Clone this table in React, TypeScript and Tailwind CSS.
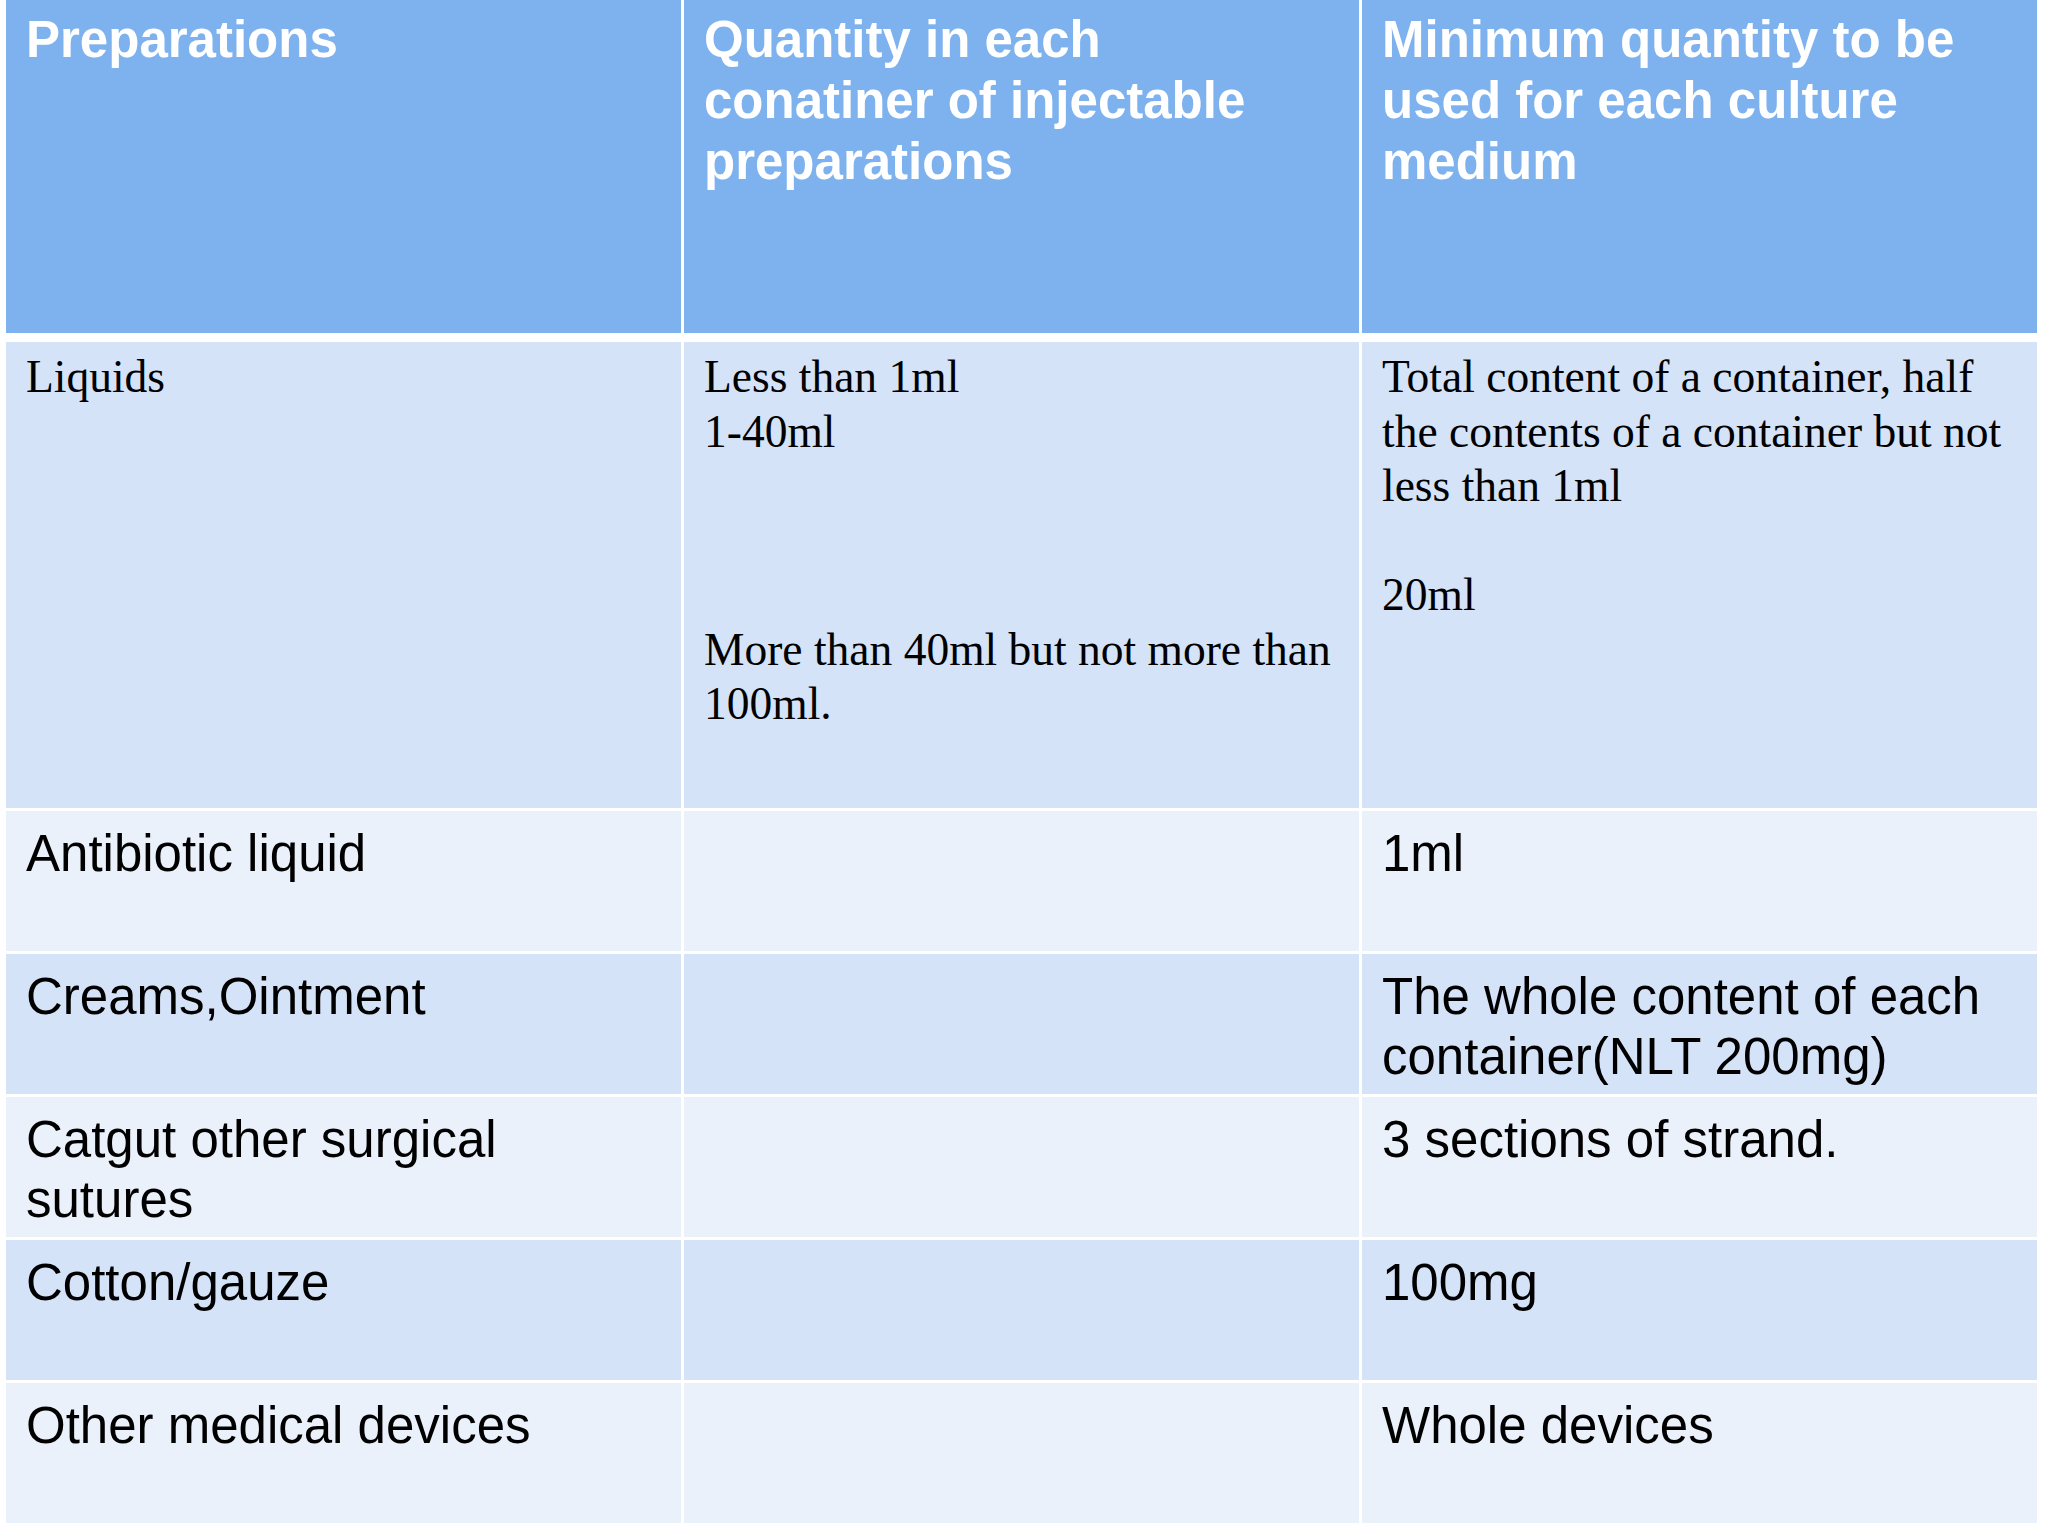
import React from "react";

const HEAD = "bg-[#7eb2ee] text-white font-bold text-[51px] leading-[61px] pl-[20px] pr-[12px] pt-[9px] [font-family:'Liberation_Sans',Arial,sans-serif]";
const SERIF = "text-black text-[45.5px] leading-[54.5px] pl-[20px] pr-[12px] pt-[8px] [font-family:'Liberation_Serif','Times_New_Roman',serif]";
const SANS = "text-black text-[51px] leading-[60px] pl-[20px] pr-[12px] pt-[13px] [font-family:'Liberation_Sans',Arial,sans-serif]";

const rows: { a: React.ReactNode; c: React.ReactNode; dark: boolean }[] = [
  { a: "Antibiotic liquid", c: "1ml", dark: false },
  {
    a: "Creams,Ointment",
    c: (
      <>
        The whole content of each
        <br />
        container(NLT 200mg)
      </>
    ),
    dark: true,
  },
  {
    a: (
      <>
        Catgut other surgical
        <br />
        sutures
      </>
    ),
    c: "3 sections of strand.",
    dark: false,
  },
  { a: "Cotton/gauze", c: "100mg", dark: true },
  { a: "Other medical devices", c: "Whole devices", dark: false },
];

export default function App() {
  return (
    <div className="w-[2048px] h-[1536px] bg-white pl-[6px] overflow-hidden">
      <div className="w-[2031px] flex flex-col">
        {/* Header */}
        <div className="grid grid-cols-[675px_675px_675px] gap-x-[3px] h-[333px]">
          <div className={HEAD}>Preparations</div>
          <div className={HEAD}>
            Quantity in each
            <br />
            conatiner of injectable
            <br />
            preparations
          </div>
          <div className={HEAD}>
            Minimum quantity to be
            <br />
            used for each culture
            <br />
            medium
          </div>
        </div>

        {/* Liquids */}
        <div className="grid grid-cols-[675px_675px_675px] gap-x-[3px] h-[466px] mt-[9px]">
          <div className={`${SERIF} bg-[#d5e3f8]`}>Liquids</div>
          <div className={`${SERIF} bg-[#d5e3f8]`}>
            Less than 1ml
            <br />
            1-40ml
            <br />
            <br />
            <br />
            <br />
            More than 40ml but not more than
            <br />
            100ml.
          </div>
          <div className={`${SERIF} bg-[#d5e3f8]`}>
            Total content of a container, half
            <br />
            the contents of a container but not
            <br />
            less than 1ml
            <br />
            <br />
            20ml
          </div>
        </div>

        {rows.map((r, i) => {
          const bg = r.dark ? "bg-[#d5e3f8]" : "bg-[#ebf1fb]";
          return (
            <div
              key={i}
              className="grid grid-cols-[675px_675px_675px] gap-x-[3px] h-[140px] mt-[3px]"
            >
              <div className={`${SANS} ${bg}`}>{r.a}</div>
              <div className={`${SANS} ${bg}`}></div>
              <div className={`${SANS} ${bg}`}>{r.c}</div>
            </div>
          );
        })}
      </div>
    </div>
  );
}
